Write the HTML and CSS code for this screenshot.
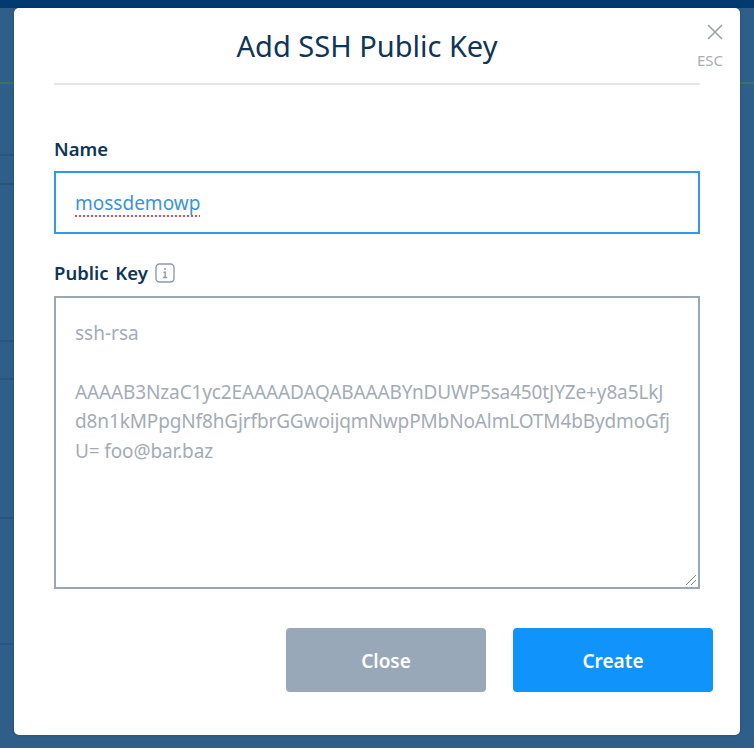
FILE: index.html
```html
<!DOCTYPE html>
<html lang="en">
<head>
    <meta charset="UTF-8">
    <meta name="viewport" content="width=device-width, initial-scale=1.0">
    <title>Add SSH Public Key</title>
    <link rel="stylesheet" href="styles.css">
</head>
<body>
    <div class="backdrop"></div>
    <div class="topbar"></div>
    <div class="modal">
        <button class="esc" type="button">
            <svg class="esc-icon" viewBox="0 0 16 16" width="16" height="16">
                <path d="M1 1L15 15M15 1L1 15"></path>
            </svg>
            <span>ESC</span>
        </button>
        <h1>Add SSH Public Key</h1>
        <div class="field name-field">
            <label class="field-label">Name</label>
            <div class="name-input"><span class="misspelt">mossdemowp</span></div>
        </div>
        <div class="field key-field">
            <label class="field-label">Public Key
                <svg class="info-icon" viewBox="0 0 20 20" width="20" height="20">
                    <rect x="1" y="1" width="18" height="18" rx="3.5"></rect>
                    <path d="M10 5V7M8.4 9.2H10.2V14.5M8 14.5H12.2"></path>
                </svg>
            </label>
            <div class="key-input">
                <p>ssh-rsa</p>
                <p class="key-body">AAAAB3NzaC1yc2EAAAADAQABAAABYnDUWP5sa450tJYZe+y8a5LkJ<br>d8n1kMPpgNf8hGjrfbrGGwoijqmNwpPMbNoAlmLOTM4bBydmoGfj<br>U= foo@bar.baz</p>
                <svg class="grip" viewBox="0 0 12 12" width="12" height="12">
                    <path d="M1 11L11 1M6 11L11 6"></path>
                </svg>
            </div>
        </div>
        <div class="actions">
            <button class="btn btn-close" type="button">Close</button>
            <button class="btn btn-create" type="button">Create</button>
        </div>
    </div>
</body>
</html>
```

FILE: styles.css
```css
html, body {
    height: 100%;
}
body {
    margin: 0;
    height: 748px;
    overflow: hidden;
    background-color: #2f5f88;
    font-family: "Noto Sans", Arial, sans-serif;
    color: #0f3557;
}
/* page behind the dimmed overlay, only its row lines show at the edges */
.backdrop {
    position: absolute;
    top: 0;
    left: 0;
    width: 754px;
    height: 748px;
    background-repeat: no-repeat;
    background-size: 100% 2px, 14px 2px, 14px 2px, 14px 2px, 14px 2px, 14px 2px, 14px 2px;
    background-image:
        linear-gradient(#3a7168, #3a7168),
        linear-gradient(#295579, #295579),
        linear-gradient(#295579, #295579),
        linear-gradient(#295579, #295579),
        linear-gradient(#295579, #295579),
        linear-gradient(#295579, #295579),
        linear-gradient(#295579, #295579);
    background-position:
        0 82px,
        0 154px,
        0 183px,
        0 340px,
        0 378px,
        0 517px,
        0 643px;
}
.topbar {
    position: relative;
    height: 8px;
    background-color: #003a6e;
}
.modal {
    position: relative;
    box-sizing: border-box;
    width: 726px;
    height: 727px;
    margin-left: 14px;
    padding: 0 40px;
    background: white;
    border-radius: 5px;
    box-shadow: 0 0 3px rgba(0, 40, 80, 0.35);
}
h1 {
    margin: 0;
    height: 77px;
    box-sizing: border-box;
    padding: 16px 20px 0 0;
    border-bottom: 2px solid #e4e6e8;
    font-size: 29px;
    line-height: 44px;
    font-weight: 400;
    text-align: center;
    color: #0f3557;
}
.esc {
    position: absolute;
    top: 16px;
    right: 17px;
    display: flex;
    flex-direction: column;
    align-items: flex-end;
    gap: 12px;
    padding: 0;
    border: 0;
    background: none;
    font: inherit;
    font-size: 15px;
    line-height: 16px;
    color: #a9aeb3;
}
.esc-icon path {
    fill: none;
    stroke: #9aa0a6;
    stroke-width: 1.6;
}
.field-label {
    display: flex;
    align-items: center;
    gap: 7px;
    font-size: 18.5px;
    line-height: 24px;
    font-weight: 600;
    word-spacing: 2px;
    color: #0f3557;
}
.name-field {
    padding-top: 52px;
}
.name-input {
    box-sizing: border-box;
    height: 63px;
    margin-top: 10px;
    padding: 15px 19px;
    border: 2.5px solid #2f9be8;
    font-size: 19px;
    line-height: 30px;
    color: #3596dc;
}
.misspelt {
    text-decoration: underline dotted #e0524f 2px;
    text-underline-offset: 5px;
}
.key-field {
    padding-top: 27px;
}
.info-icon rect {
    fill: none;
    stroke: #8f9ba6;
    stroke-width: 1.4;
}
.info-icon path {
    fill: none;
    stroke: #8f9ba6;
    stroke-width: 1.4;
}
.key-input {
    position: relative;
    box-sizing: border-box;
    height: 293px;
    margin-top: 11px;
    padding: 21px 19px;
    border: 2px solid #9aa6b6;
    font-size: 19px;
    line-height: 29.5px;
    color: #a3acb5;
}
.key-input p {
    margin: 0;
}
.key-body {
    padding-top: 29px;
    letter-spacing: -0.13px;
}
.grip {
    position: absolute;
    right: 1px;
    bottom: 1px;
}
.grip path {
    fill: none;
    stroke: #7d858c;
    stroke-width: 1;
}
.actions {
    display: flex;
    justify-content: flex-end;
    gap: 27px;
    margin-top: 39px;
    margin-right: -13px;
}
.btn {
    width: 200px;
    height: 64px;
    padding: 2px 0 0;
    border: 0;
    border-radius: 4px;
    color: white;
    font: inherit;
    font-size: 19px;
    font-weight: 600;
}
.btn-close {
    background-color: #99a8b8;
}
.btn-create {
    background-color: #1094fb;
}
```
